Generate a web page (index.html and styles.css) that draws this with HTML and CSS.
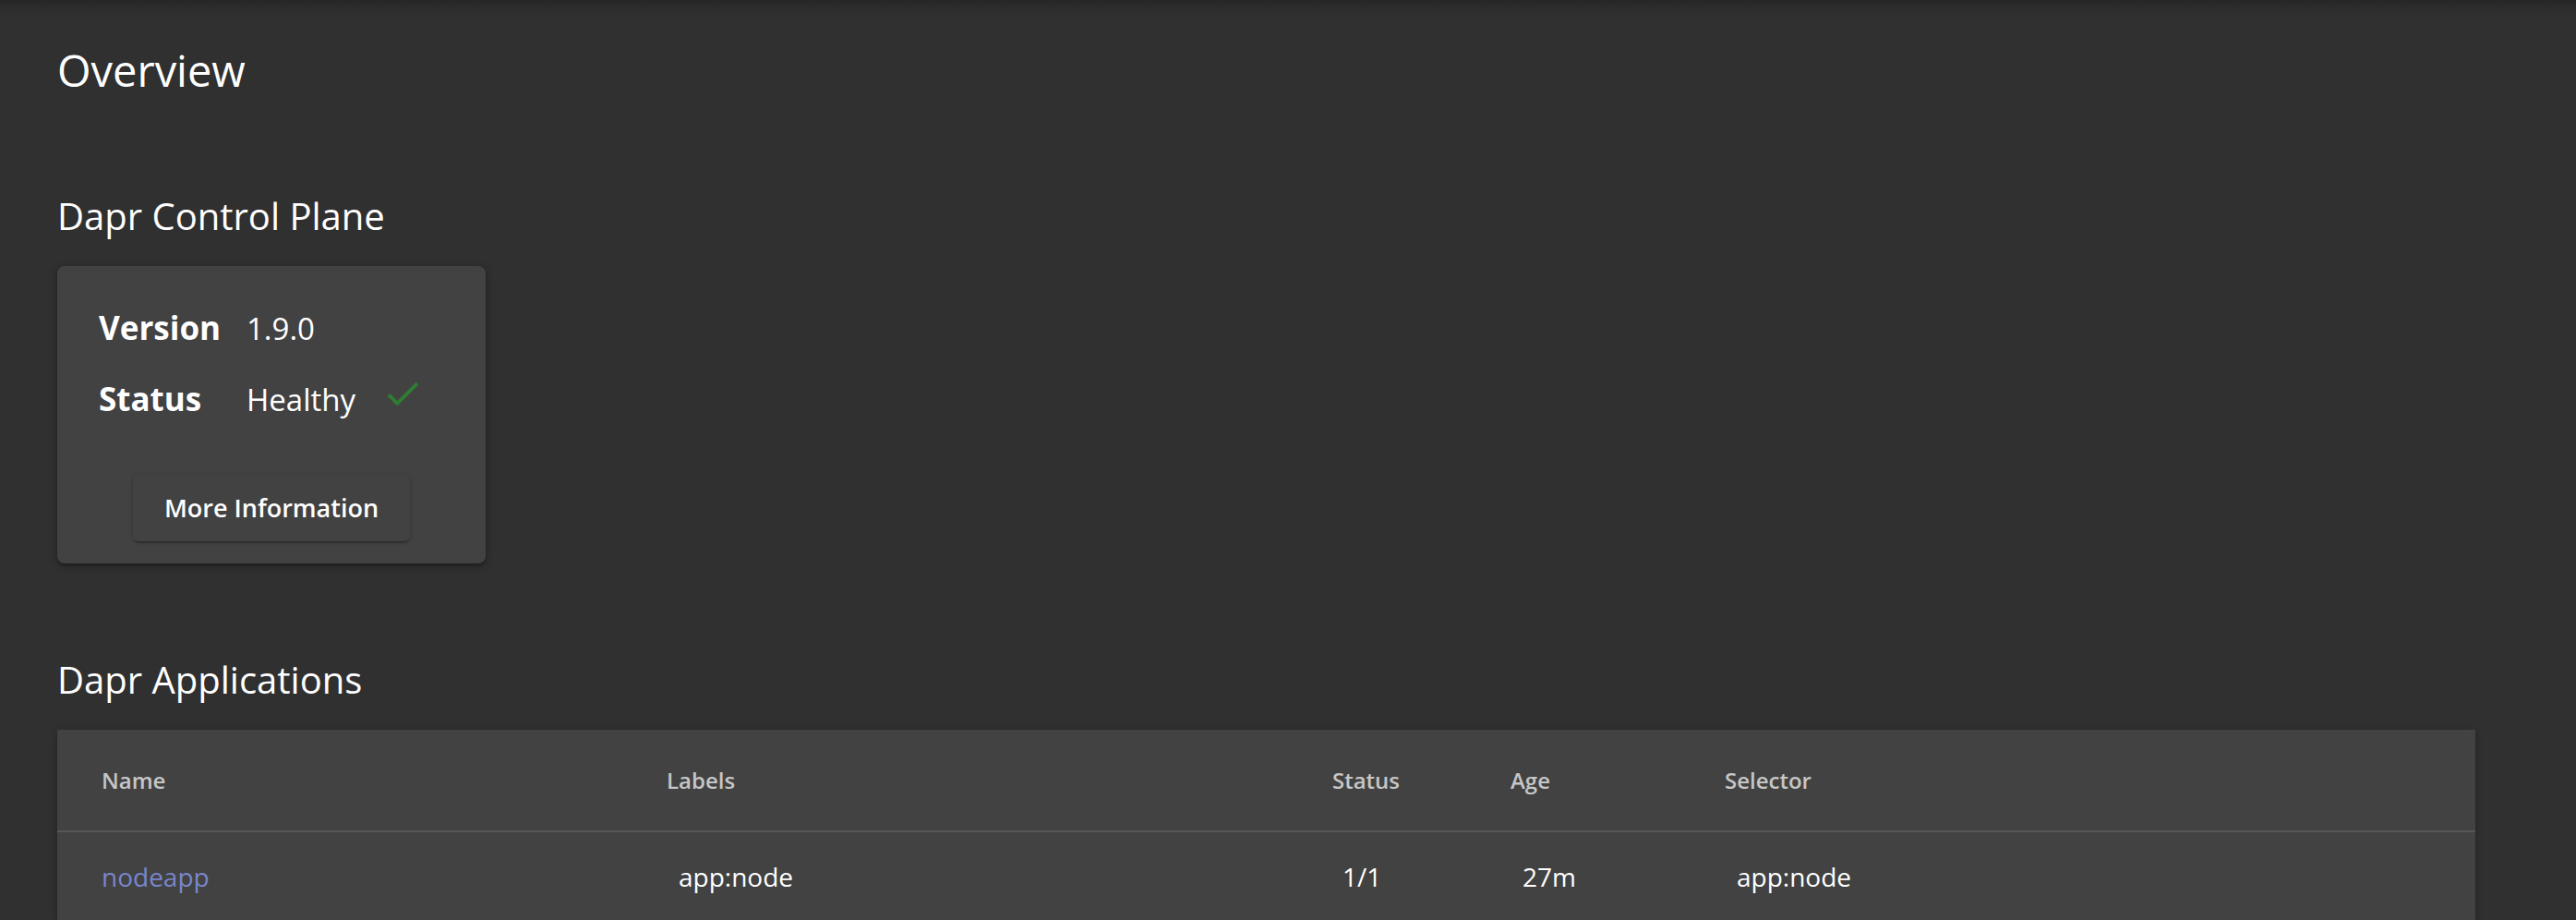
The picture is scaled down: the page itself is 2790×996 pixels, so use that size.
FILE: index.html
```html
<!DOCTYPE html>
<html lang="en">
<head>
<meta charset="utf-8">
<title>Overview</title>
<link rel="stylesheet" href="styles.css">
</head>
<body>
<main class="page">
  <h1 class="page-title">Overview</h1>

  <h2 class="section-title">Dapr Control Plane</h2>
  <section class="card">
    <div class="info-row">
      <span class="info-label">Version</span>
      <span class="info-value">1.9.0</span>
    </div>
    <div class="info-row">
      <span class="info-label">Status</span>
      <span class="info-value">Healthy</span>
      <svg class="check" viewBox="0 0 24 24" aria-hidden="true"><path d="M9 16.17L4.83 12l-1.42 1.41L9 19 21 7l-1.41-1.41z"/></svg>
    </div>
    <div class="card-actions">
      <button class="btn" type="button">More Information</button>
    </div>
  </section>

  <h2 class="section-title apps-title">Dapr Applications</h2>
  <section class="table">
    <div class="grid-row thead">
      <span class="th">Name</span>
      <span class="th">Labels</span>
      <span class="th">Status</span>
      <span class="th">Age</span>
      <span class="th">Selector</span>
    </div>
    <div class="grid-row tbody-row">
      <span class="td"><a class="app-link" href="#">nodeapp</a></span>
      <span class="td pad">app:node</span>
      <span class="td pad-s">1/1</span>
      <span class="td pad">27m</span>
      <span class="td pad">app:node</span>
    </div>
  </section>
</main>
</body>
</html>
```

FILE: styles.css
```css
html, body {
  margin: 0;
  padding: 0;
  background: #303030;
}

body {
  font-family: "Open Sans", "Noto Sans", "DejaVu Sans", sans-serif;
  color: #ffffff;
  background: linear-gradient(to bottom, #262626 0, #2c2c2c 8px, #303030 18px) no-repeat, #303030;
  min-height: 100vh;
}

.page {
  padding: 48px 109px 60px 62px;
}

.page-title {
  margin: 0;
  font-size: 47px;
  line-height: 56px;
  font-weight: 400;
}

.section-title {
  margin: 106px 0 0;
  font-size: 40px;
  line-height: 48px;
  font-weight: 400;
}

.apps-title {
  margin-top: 102px;
}

.card {
  margin-top: 30px;
  width: 464px;
  box-sizing: border-box;
  padding: 28px 45px 24px;
  background: #424242;
  border-radius: 8px;
  box-shadow: 0 3px 3px -2px rgba(0,0,0,0.25), 0 3px 6px 0 rgba(0,0,0,0.2), 0 2px 10px 0 rgba(0,0,0,0.18);
}

.info-row {
  display: flex;
  align-items: baseline;
  height: 77px;
  line-height: 77px;
}

.info-label {
  width: 160px;
  flex: none;
  font-size: 35px;
  font-weight: 700;
}

.info-value {
  font-size: 33px;
  font-weight: 400;
}

.check {
  width: 46px;
  height: 46px;
  margin-left: 28px;
  align-self: center;
  margin-bottom: 11px;
  fill: #2e7d32;
}

.card-actions {
  display: flex;
  justify-content: center;
  margin-top: 44px;
  margin-left: -45px;
  margin-right: -45px;
}

.btn {
  width: 300px;
  height: 72px;
  padding: 0;
  border: none;
  border-radius: 6px;
  background: #424242;
  color: #ffffff;
  font-family: inherit;
  font-size: 27px;
  font-weight: 600;
  line-height: 72px;
  box-shadow: 0 3px 1px -2px rgba(0,0,0,0.2), 0 2px 2px 0 rgba(0,0,0,0.14), 0 1px 5px 0 rgba(0,0,0,0.12);
  cursor: pointer;
}

.table {
  margin-top: 30px;
  background: #424242;
  box-shadow: 0 3px 3px -2px rgba(0,0,0,0.2), 0 3px 4px 0 rgba(0,0,0,0.14), 0 1px 8px 0 rgba(0,0,0,0.12);
}

.grid-row {
  display: grid;
  grid-template-columns: 612px 721px 193px 232px 1fr;
  padding-left: 48px;
  align-items: center;
}

.thead {
  height: 109px;
  border-bottom: 2px solid #575757;
}

.th {
  font-size: 24px;
  font-weight: 600;
  color: #c6c6c6;
  line-height: 32px;
}

.tbody-row {
  height: 96px;
  border-bottom: 2px solid #575757;
}

.td {
  font-size: 28px;
  line-height: 38px;
  color: #ffffff;
}

.td.pad {
  padding-left: 13px;
}

.td.pad-s {
  padding-left: 11px;
}

.app-link {
  color: #7986cb;
  text-decoration: none;
}
```
